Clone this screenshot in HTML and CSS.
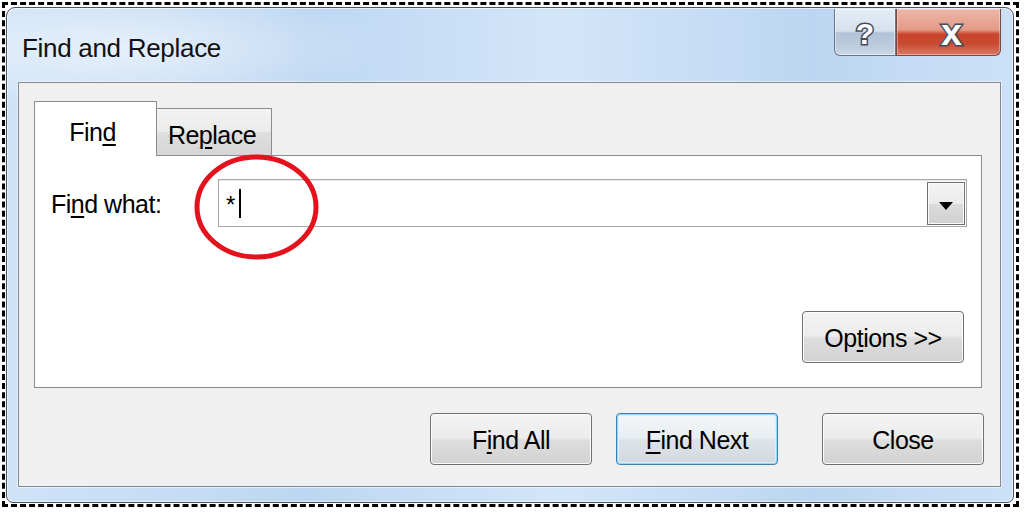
FILE: index.html
```html
<!DOCTYPE html>
<html lang="en">
<head>
<meta charset="utf-8">
<title>Find and Replace</title>
<link rel="stylesheet" href="styles.css">
</head>
<body>
<div class="capture">
  <div class="window">
    <div class="titlebar">
      <span class="title">Find and Replace</span>
      <div class="caption-btns">
        <div class="cbtn help">
          <svg width="60" height="46" viewBox="0 0 60 46"><text x="30" y="35" text-anchor="middle" class="glyph">?</text></svg>
        </div>
        <div class="cbtn close">
          <svg width="104" height="46" viewBox="0 0 104 46"><text x="55" y="36" text-anchor="middle" class="glyph glyph-x">x</text></svg>
        </div>
      </div>
    </div>
    <div class="client">
      <div class="tabs">
        <div class="tab active">Fin<u>d</u></div>
        <div class="tab">Re<u>p</u>lace</div>
      </div>
      <div class="panel">
        <div class="field-row">
          <label class="label">Fi<u>n</u>d what:</label>
          <div class="combo">
            <span class="value">*</span><span class="caret"></span>
            <div class="drop">
              <svg width="14" height="8" viewBox="0 0 14 8"><polygon points="0,0 14,0 7,8" fill="#000"/></svg>
            </div>
          </div>
          <svg class="annot" width="125" height="106" viewBox="0 0 125 106">
            <ellipse cx="62.5" cy="53" rx="59.5" ry="50" fill="none" stroke="#e3121c" stroke-width="5"/>
          </svg>
        </div>
        <div class="panel-foot">
          <button class="btn">Op<u>t</u>ions &gt;&gt;</button>
        </div>
      </div>
      <div class="actions">
        <button class="btn">F<u>i</u>nd All</button>
        <button class="btn default"><u>F</u>ind Next</button>
        <button class="btn close-btn">Close</button>
      </div>
    </div>
  </div>
</div>
</body>
</html>
```

FILE: styles.css
```css
html, body {
  margin: 0;
  padding: 0;
  background: #ffffff;
}

body {
  width: 1024px;
  height: 514px;
  overflow: hidden;
  font-family: "Liberation Sans", Arial, sans-serif;
  color: #000;
}

.capture {
  box-sizing: border-box;
  width: 1017px;
  height: 505px;
  margin: 2px 0 0 2px;
  border: 3px dashed #000;
  padding: 2px 2px 1px 1px;
  display: flex;
}

.window {
  flex: 1;
  display: flex;
  flex-direction: column;
  border: 1px solid #4d5257;
  border-radius: 9px 9px 7px 7px;
  padding: 0 12px 15px 11px;
  background:
    radial-gradient(ellipse 260px 60px at 120px 40px, rgba(255,255,255,0.55), rgba(255,255,255,0) 100%),
    linear-gradient(90deg, #cfe3f8 0%, #bdd7f2 30%, #d3e6f9 55%, #bcd6f1 80%, #cce1f7 100%);
  box-shadow: inset 0 0 0 1px rgba(255,255,255,0.55);
}

.titlebar {
  height: 74px;
  display: flex;
  align-items: flex-start;
}

.title {
  margin-top: 25px;
  margin-left: 4px;
  font-size: 26px;
  letter-spacing: -0.3px;
  line-height: 30px;
  color: #111;
}

.caption-btns {
  margin-left: auto;
  margin-top: 1px;
  display: flex;
}

.cbtn {
  height: 47px;
  box-sizing: border-box;
  display: flex;
  align-items: center;
  justify-content: center;
  border: 1px solid #6c7687;
  border-top: none;
}

.help {
  width: 62px;
  border-radius: 0 0 0 6px;
  background: linear-gradient(#e5edf6 0%, #d6e1ee 48%, #b2c3d8 52%, #bccbdd 80%, #ccd8e6 100%);
  box-shadow: inset 0 0 0 1px rgba(255,255,255,0.45);
}

.close {
  width: 105px;
  border-color: #7a4a44;
  border-radius: 0 0 6px 0;
  background: linear-gradient(#eeb6a8 0%, #e49a88 45%, #c9452b 55%, #c94a31 75%, #d87a64 100%);
  box-shadow: inset 0 0 0 1px rgba(255,255,255,0.35);
}

.glyph {
  font-family: "Liberation Sans", Arial, sans-serif;
  font-weight: bold;
  font-size: 30px;
  fill: #ffffff;
  stroke: #454c5a;
  stroke-width: 3px;
  paint-order: stroke;
}

.glyph-x {
  font-size: 38px;
}

.client {
  flex: 1;
  display: flex;
  flex-direction: column;
  background: #f0f0f0;
  border: 1px solid #85898f;
  padding: 18px 18px 21px 15px;
  box-shadow: 0 0 0 1px rgba(255,255,255,0.5);
}

.tabs {
  height: 54px;
  display: flex;
  align-items: flex-end;
}

.tab {
  box-sizing: border-box;
  border: 1px solid #898c95;
  border-bottom: none;
  font-size: 25px;
  letter-spacing: -0.5px;
  text-align: center;
}

.tab.active {
  position: relative;
  z-index: 1;
  width: 123px;
  height: 55px;
  margin-bottom: -1px;
  padding: 16px 6px 0 0;
  background: #ffffff;
}

.tab:not(.active) {
  width: 116px;
  height: 47px;
  margin-left: -1px;
  padding: 12px 4px 0 0;
  background: linear-gradient(#f3f3f3 0%, #ebebeb 50%, #dedede 51%, #d6d6d6 100%);
}

u {
  text-decoration: underline;
  text-decoration-thickness: 2px;
  text-underline-offset: 3px;
}

.panel {
  height: 233px;
  box-sizing: border-box;
  display: flex;
  flex-direction: column;
  justify-content: space-between;
  background: #ffffff;
  border: 1px solid #898c95;
  padding: 23px 14px 24px 16px;
}

.field-row {
  position: relative;
  display: flex;
  align-items: center;
  height: 48px;
}

.label {
  width: 167px;
  font-size: 25px;
  letter-spacing: -0.5px;
  padding-top: 2px;
}

.combo {
  flex: 1;
  height: 48px;
  box-sizing: border-box;
  display: flex;
  align-items: center;
  border: 1px solid #a7a9ad;
  box-shadow: inset 0 1px 0 #e6e8ec;
  background: #fff;
  padding: 1px 1px 1px 7px;
}

.value {
  font-size: 24px;
  line-height: 24px;
  margin-top: 4px;
}

.caret {
  width: 2px;
  height: 29px;
  background: #000;
  margin-left: 4px;
}

.drop {
  margin-left: auto;
  width: 38px;
  height: 43px;
  box-sizing: border-box;
  display: flex;
  align-items: center;
  justify-content: center;
  padding-top: 6px;
  border: 1px solid #707070;
  background: linear-gradient(#f4f4f4 0%, #ebebeb 50%, #dcdcdc 51%, #d0d0d0 100%);
  box-shadow: inset 0 0 0 1px #fafafa;
}

.annot {
  position: absolute;
  left: 143px;
  top: -25px;
  pointer-events: none;
}

.panel-foot {
  display: flex;
  justify-content: flex-end;
  padding-right: 3px;
}

.btn {
  width: 162px;
  height: 52px;
  box-sizing: border-box;
  font-family: "Liberation Sans", Arial, sans-serif;
  font-size: 25px;
  letter-spacing: -0.5px;
  color: #000;
  border: 1px solid #707070;
  border-radius: 4px;
  background: linear-gradient(#f3f3f3 0%, #ececec 48%, #dedede 52%, #d2d2d2 100%);
  box-shadow: inset 0 0 0 1px #fbfbfb;
  padding: 2px 0 0 0;
}

.btn.default {
  border-color: #3c7fb1;
  box-shadow: inset 0 0 0 1px #9fd5f4, inset 0 0 0 2px #d9f0fc;
  background: linear-gradient(#f2f6f9 0%, #e9eef2 48%, #dde3e8 52%, #d2d9df 100%);
}

.actions {
  margin-top: 25px;
  margin-right: -2px;
  display: flex;
  justify-content: flex-end;
  gap: 24px;
}

.actions .close-btn {
  margin-left: 20px;
}
```
